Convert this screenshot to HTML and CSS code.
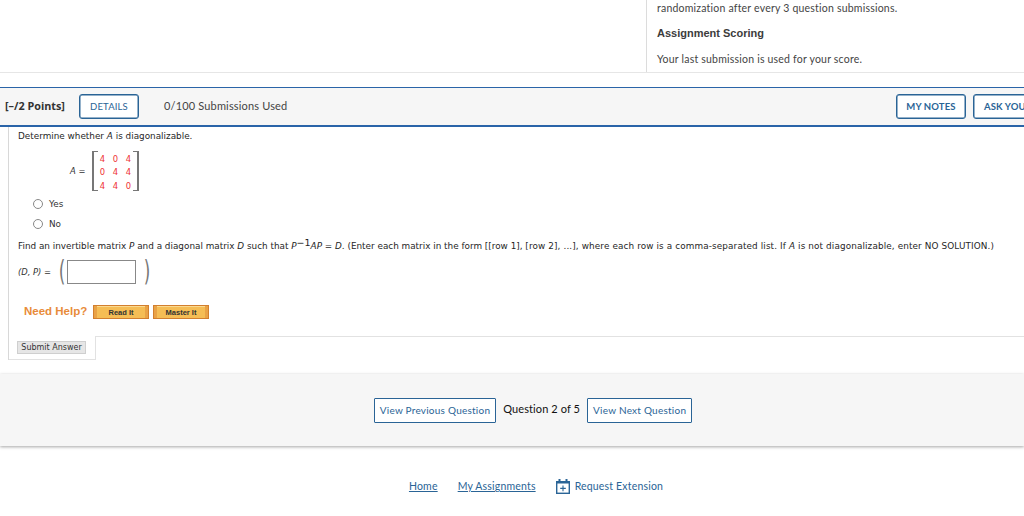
FILE: index.html
```html
<!DOCTYPE html>
<html lang="en">
<head>
<meta charset="utf-8">
<title>Question 2 of 5</title>
<link rel="stylesheet" href="styles.css">
</head>
<body>
<div class="top">
  <aside class="note">
    <p class="note-line">randomization after every 3 question submissions.</p>
    <h4 class="note-head">Assignment Scoring</h4>
    <p class="note-line">Your last submission is used for your score.</p>
  </aside>
</div>

<section class="qbar">
  <strong class="points">[–/2 Points]</strong>
  <a class="btn details">DETAILS</a>
  <span class="subs">0/100 Submissions Used</span>
  <span class="qbar-right">
    <a class="btn notes">MY NOTES</a>
    <a class="btn ask">ASK YOUR TEACHER</a>
  </span>
</section>

<section class="question">
  <p class="prompt">Determine whether <i>A</i> is diagonalizable.</p>
  <div class="matrix-row">
    <span class="eq eq-a"><i>A</i> =</span>
    <div class="matrix">
      <span>4</span><span>0</span><span>4</span>
      <span>0</span><span>4</span><span>4</span>
      <span>4</span><span>4</span><span>0</span>
    </div>
  </div>
  <label class="radio"><span class="dot"></span>Yes</label>
  <label class="radio"><span class="dot"></span>No</label>
  <p class="find">Find an invertible matrix <i>P</i> and a diagonal matrix <i>D</i> such that <i>P</i><sup class="sup">−1</sup><i>AP</i> = <i>D</i>. (Enter each matrix in the form [[row 1], <span class="find-tail">[row 2], ...], where each row is a comma-separated list. If <i>A</i> is not diagonalizable, enter NO SOLUTION.)</span></p>
  <div class="answer-row">
    <span class="eq eq-dp"><i>(D, P)</i> =</span>
    <span class="paren">(</span>
    <span class="answer-box"></span>
    <span class="paren">)</span>
  </div>
  <div class="help">
    <span class="help-label">Need Help?</span>
    <a class="help-btn">Read It</a>
    <a class="help-btn">Master It</a>
  </div>
  <div class="submit-row">
    <div class="submit-cell"><button class="submit" type="button">Submit Answer</button></div>
    <div class="submit-rest"></div>
  </div>
</section>

<nav class="pager">
  <a class="pager-btn">View Previous Question</a>
  <span class="pager-label">Question 2 of 5</span>
  <a class="pager-btn">View Next Question</a>
</nav>

<footer class="foot">
  <a class="foot-link">Home</a>
  <a class="foot-link">My Assignments</a>
  <a class="foot-ext">
    <svg class="cal" width="14" height="15" viewBox="0 0 14 15" aria-hidden="true">
      <rect x="0.7" y="2.7" width="12.6" height="11.6" fill="none" stroke="#2a6496" stroke-width="1.4"/>
      <rect x="0" y="2" width="14" height="2.5" fill="#2a6496"/>
      <rect x="2.5" y="0" width="2" height="3" fill="#2a6496"/>
      <rect x="9.5" y="0" width="2" height="3" fill="#2a6496"/>
      <path d="M7 6.6v5.6M4.2 9.4h5.6" stroke="#2a6496" stroke-width="1.1" fill="none"/>
    </svg>
    Request Extension
  </a>
</footer>
</body>
</html>
```
FILE: styles.css
```css
html, body { margin: 0; padding: 0; }
body {
  width: 1024px;
  height: 516px;
  overflow: hidden;
  background: #fff;
  font-family: "Lato", "Open Sans", sans-serif;
  color: #333;
}
p, h4 { margin: 0; }

.top {
  height: 72px;
  display: flex;
  justify-content: flex-end;
  border-bottom: 1px solid #e6e6e6;
}
.note {
  width: 367px;
  padding-left: 10px;
  border-left: 1px solid #dcdcdc;
}
.note-line { font-size: 10.5px; line-height: 16px; letter-spacing: 0.21px; color: #444; }
.note-head {
  font-family: "Liberation Sans", sans-serif;
  font-size: 11px;
  line-height: 14px;
  font-weight: bold;
  margin: 10px 0 11px;
  color: #3c3c3c;
}

.qbar {
  margin-top: 14px;
  height: 37px;
  display: flex;
  align-items: center;
  background: #f6f6f6;
  border-top: 1px solid #2a64a8;
  border-bottom: 2px solid #2a64a8;
  padding-left: 5px;
  white-space: nowrap;
  overflow: hidden;
}
.points { font-size: 10.8px; font-family: "Open Sans", sans-serif; color: #333; width: 74px; margin-bottom: 2px; }
.btn {
  box-sizing: border-box;
  display: flex;
  align-items: center;
  justify-content: center;
  height: 25px;
  border: 1px solid #2a6496;
  border-radius: 3px;
  box-shadow: inset 0 0 0 0.5px #2a6496;
  background: #fff;
  color: #2a6496;
  font-size: 9.5px;
  font-weight: bold;
  letter-spacing: 0.15px;
  flex: none;
}
.details { width: 60px; font-weight: normal; }
.subs { margin-left: 25px; font-size: 11px; letter-spacing: 0.16px; color: #444; margin-bottom: 2px; }
.qbar-right { margin-left: auto; display: flex; gap: 7px; margin-right: -84px; }
.notes { width: 70px; }
.ask { width: 135px; justify-content: flex-start; padding-left: 10px; }

.question {
  box-sizing: border-box;
  height: 233px;
  margin-left: 8px;
  padding: 4px 0 0 9px;
  border-left: 1px solid #d8d8d8;
  font-family: "DejaVu Sans", Verdana, sans-serif;
  font-size: 8.85px;
  color: #1f1f1f;
  display: flex;
  flex-direction: column;
}
.prompt { line-height: 10px; white-space: nowrap; }
.matrix-row { display: flex; align-items: center; margin: 10px 0 0 52px; height: 40px; gap: 4px; }
.eq { white-space: nowrap; color: #333; flex: none; }
.eq-a { width: 18px; font-size: 8.4px; }
.eq-dp { width: 39px; font-size: 8.4px; }
.matrix {
  display: grid;
  grid-template-columns: repeat(3, 13px);
  grid-auto-rows: 13.5px;
  place-items: center;
  width: 47px;
  height: 40px;
  box-sizing: border-box;
  padding: 1px 4px 0 4px;
  color: #e33;
  position: relative;
  font-size: 8.4px;
}
.matrix::before, .matrix::after {
  content: "";
  position: absolute;
  top: 0;
  bottom: 0;
  width: 4px;
  border-top: 1px solid #777;
  border-bottom: 1px solid #777;
}
.matrix::before { left: 0; border-left: 2px solid #777; }
.matrix::after { right: 0; border-right: 2px solid #777; }
.radio { display: flex; align-items: center; height: 20px; padding-left: 15px; gap: 6px; color: #333; }
.radio:first-of-type { margin-top: 3px; }
.dot {
  width: 8px;
  height: 8px;
  border-radius: 50%;
  border: 1px solid #888;
  background: #fff;
  flex: none;
}
.find { margin-top: 6px; line-height: 12px; white-space: nowrap; }
.find-tail { letter-spacing: 0.12px; }
.sup { font-size: 9.5px; line-height: 0; vertical-align: 3px; }
.answer-row { display: flex; align-items: center; height: 25px; margin-top: 7px; }
.paren {
  font-family: "DejaVu Sans", sans-serif;
  font-size: 28px;
  line-height: 25px;
  color: #777;
  transform: scaleX(0.6);
  width: 9px;
  text-align: center;
  flex: none;
}
.answer-box {
  box-sizing: border-box;
  width: 69px;
  height: 24px;
  border: 1px solid #888;
  background: #fff;
  margin: 0 6px 0 1px;
  flex: none;
}
.help { display: flex; align-items: center; margin: 21px 0 0 6px; height: 14px; gap: 4px; }
.help-label {
  font-family: "Liberation Sans", sans-serif;
  font-size: 11.5px;
  font-weight: bold;
  color: #e88b3a;
  width: 65px;
  white-space: nowrap;
  margin-bottom: 2px;
}
.help-btn {
  box-sizing: border-box;
  width: 56px;
  height: 14px;
  display: flex;
  align-items: center;
  justify-content: center;
  background: #f5bd55;
  border: 1px solid #d27f2e;
  box-shadow: inset 3px 0 0 #e9a246, inset -3px 0 0 #e9a246, inset 0 1px 0 #fbd98f;
  font-family: "Liberation Sans", sans-serif;
  font-size: 7.5px;
  font-weight: bold;
  color: #333;
}
.submit-row { display: flex; margin: 17px 0 0 -9px; flex: 1; }
.submit-cell {
  box-sizing: border-box;
  width: 87px;
  padding: 5px 0 0 8px;
  border-bottom: 1px solid #e2e2e2;
  border-right: 1px solid #e2e2e2;
}
.submit-rest { flex: 1; border-top: 1px solid #e2e2e2; }
.submit {
  display: block;
  box-sizing: border-box;
  width: 69px;
  height: 13px;
  padding: 0;
  background: #e6e6e6;
  border: 1px solid #cfcfcf;
  font-family: "DejaVu Sans", sans-serif;
  font-size: 8px;
  line-height: 11px;
  color: #333;
}

.pager {
  margin-top: 14px;
  height: 72px;
  background: #f6f6f6;
  box-shadow: 0 1px 3px rgba(0,0,0,.35);
  display: flex;
  justify-content: center;
  align-items: center;
  gap: 7px;
  padding-left: 42px;
}
.pager-btn {
  box-sizing: border-box;
  height: 25px;
  display: flex;
  align-items: center;
  padding: 0 5px;
  border: 1px solid #2a6496;
  border-radius: 1px;
  background: #fff;
  color: #2a6496;
  font-size: 10px;
  letter-spacing: 0.24px;
  white-space: nowrap;
}
.pager-label { font-size: 11px; letter-spacing: 0.1px; color: #111; white-space: nowrap; margin-top: -4px; }

.foot {
  display: flex;
  justify-content: center;
  align-items: center;
  gap: 20px;
  height: 80px;
  font-size: 10.5px;
  letter-spacing: 0.18px;
  color: #2a6496;
  padding-left: 48px;
}
.foot-link { text-decoration: underline; }
.foot-ext { display: flex; align-items: center; gap: 5px; }
.cal { flex: none; }
```
